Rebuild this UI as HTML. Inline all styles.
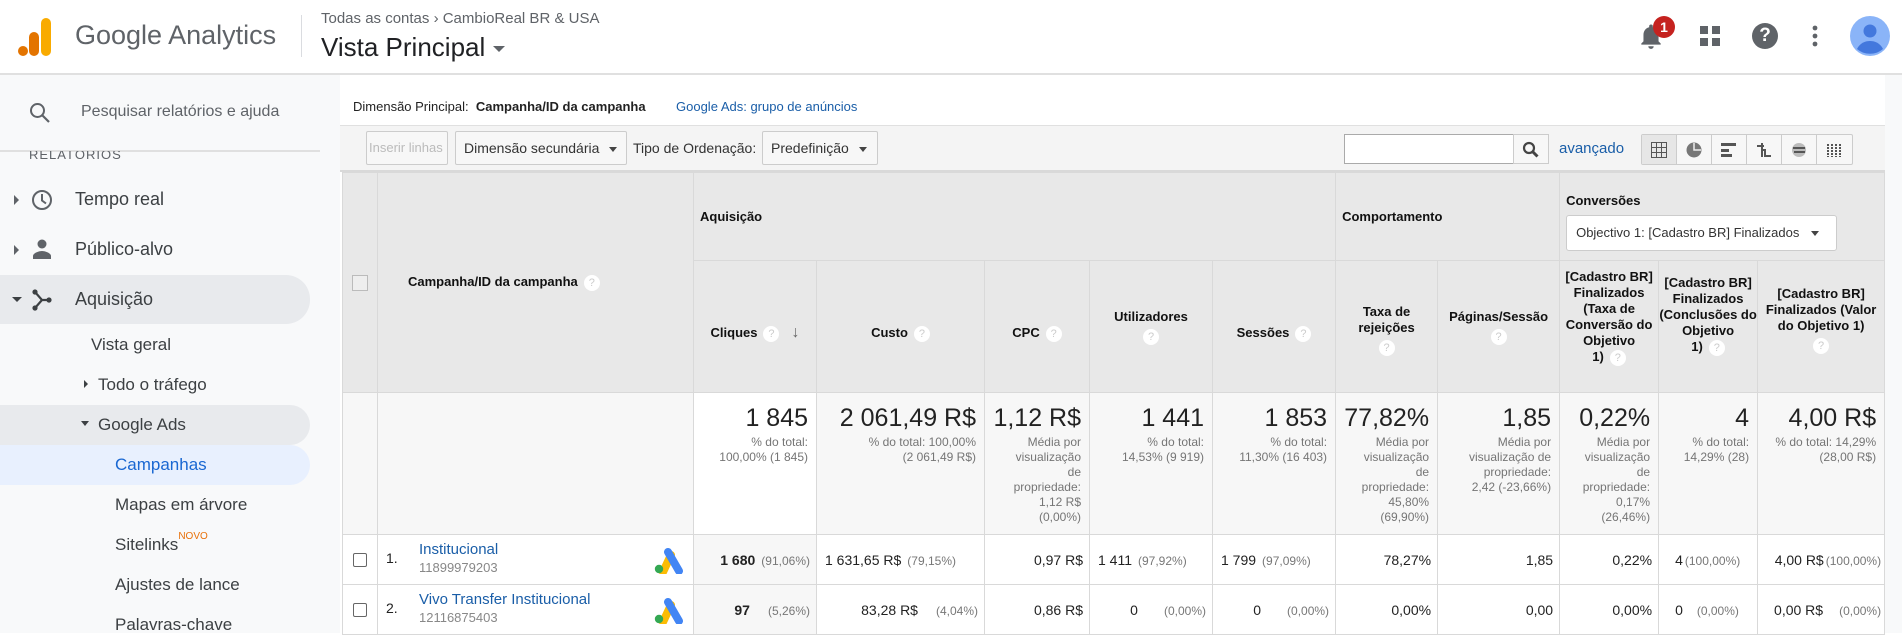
<!DOCTYPE html>
<html><head><meta charset="utf-8"><style>
*{box-sizing:border-box;margin:0;padding:0}
body{width:1902px;height:633px;overflow:hidden;font-family:"Liberation Sans",Arial,sans-serif;background:#fff;position:relative;color:#212121}
.a{position:absolute;white-space:nowrap}
#hdr{position:absolute;left:0;top:0;width:1902px;height:75px;border-bottom:2px solid #e0e0e0;background:#fff}
#side{position:absolute;left:0;top:75px;width:340px;height:558px;background:#f8f9fa;overflow:hidden}
.pill{position:absolute;left:0;width:310px;border-radius:0 24px 24px 0}
.si{position:absolute;font-size:18px;color:#3c4043}
.ss{position:absolute;font-size:17px;color:#3c4043}
#main{position:absolute;left:340px;top:75px;width:1545px;height:558px;background:#fff}
#rgt{position:absolute;left:1885px;top:75px;width:17px;height:558px;background:#f8f9fa}
.btn{position:absolute;border:1px solid #ccc;border-radius:2px;background:#f7f7f7;font-size:14px;color:#333;padding:0 8px;line-height:32px}
.caret{display:inline-block;width:0;height:0;border-left:4px solid transparent;border-right:4px solid transparent;border-top:5px solid #444;vertical-align:middle;margin-left:10px}
table{position:absolute;left:342px;top:172px;border-collapse:collapse;table-layout:fixed;width:1543px}
td{border:1px solid #d9d9d9;font-size:14px;vertical-align:middle;overflow:hidden}
.h{background:#e8e8e8;font-weight:bold;font-size:13px;color:#111;text-align:center;line-height:16px}
.q{display:inline-block;width:16px;height:16px;border-radius:50%;background:#fff;color:#ccc;font-size:11px;line-height:16px;text-align:center;font-weight:normal;vertical-align:middle;margin-left:6px}
.t{background:#f7f7f7;text-align:right;vertical-align:top;padding:10px 8px 0 4px;color:#757575;font-size:12px;line-height:15px}
.t b{display:block;font-weight:normal;font-size:25px;color:#222;line-height:30px;margin-bottom:2px}
.r{text-align:right;padding:0 6px;white-space:nowrap;color:#222}
.r s{text-decoration:none;color:#777;font-size:12px;margin-left:6px}
.cb{width:14px;height:14px;border:1.5px solid #666;border-radius:2px;margin:0 auto}
</style></head><body>
<div id="hdr">
 <svg class="a" style="left:18px;top:18px" width="34" height="38" viewBox="0 0 34 38"><rect x="23" y="0" width="10" height="38" rx="5" fill="#f9ab00"/><rect x="11" y="14" width="10" height="24" rx="5" fill="#e37400"/><circle cx="5" cy="33" r="5" fill="#e37400"/></svg>
 <div class="a" style="left:75px;top:20px;font-size:27px;color:#5f6368">Google Analytics</div>
 <div class="a" style="left:301px;top:15px;width:1px;height:42px;background:#dadce0"></div>
 <div class="a" style="left:321px;top:10px;font-size:15px;color:#5f6368">Todas as contas &rsaquo; CambioReal BR &amp; USA</div>
 <div class="a" style="left:321px;top:32px;font-size:26px;color:#202124">Vista Principal <span style="display:inline-block;border-left:6px solid transparent;border-right:6px solid transparent;border-top:6px solid #5f6368;vertical-align:middle"></span></div>
 <svg class="a" style="left:1638px;top:22px" width="26" height="28" viewBox="0 0 24 26"><path d="M12 25a2.5 2.5 0 0 0 2.5-2.5h-5A2.5 2.5 0 0 0 12 25zM19 18v-6c0-3.5-2-6.3-5.3-7.1V4a1.7 1.7 0 0 0-3.4 0v.9C7 5.7 5 8.5 5 12v6l-2 2v1h18v-1z" fill="#5f6368"/></svg>
 <div class="a" style="left:1653px;top:16px;width:22px;height:22px;border-radius:50%;background:#c5221f;color:#fff;font-size:14px;font-weight:bold;text-align:center;line-height:22px">1</div>
 <svg class="a" style="left:1700px;top:26px" width="20" height="20"><rect x="0" y="0" width="8" height="8" fill="#5f6368"/><rect x="12" y="0" width="8" height="8" fill="#5f6368"/><rect x="0" y="12" width="8" height="8" fill="#5f6368"/><rect x="12" y="12" width="8" height="8" fill="#5f6368"/></svg>
 <div class="a" style="left:1752px;top:23px;width:26px;height:26px;border-radius:50%;background:#5f6368;color:#fff;font-size:19px;font-weight:bold;text-align:center;line-height:26px">?</div>
 <svg class="a" style="left:1811px;top:25px" width="8" height="22"><circle cx="4" cy="3" r="2.4" fill="#5f6368"/><circle cx="4" cy="11" r="2.4" fill="#5f6368"/><circle cx="4" cy="19" r="2.4" fill="#5f6368"/></svg>
 <svg class="a" style="left:1850px;top:16px" width="40" height="40"><circle cx="20" cy="20" r="20" fill="#8ab4f8"/><circle cx="20" cy="15" r="6.5" fill="#4378dd"/><path d="M7 33c3-6 8-8 13-8s10 2 13 8a20 20 0 0 1-26 0z" fill="#4378dd"/></svg>
</div>
<div id="side">
 <svg class="a" style="left:29px;top:27px" width="22" height="22"><circle cx="8.5" cy="8.5" r="6.5" stroke="#5f6368" stroke-width="2" fill="none"/><path d="M13 13l7 7" stroke="#5f6368" stroke-width="2.2"/></svg>
 <div class="a" style="left:81px;top:28px;font-size:16px;color:#5f6368">Pesquisar relatórios e ajuda</div>
 <div class="a" style="left:0;top:75px;width:320px;height:2px;background:#e0e0e0"></div>
 <div class="a" style="left:29px;top:76px;font-size:13px;color:#5f6368;height:10px;overflow:hidden;line-height:8px;letter-spacing:1px">RELATÓRIOS</div>
 <div class="pill" style="top:200px;height:49px;background:#e8eaed"></div>
 <div class="pill" style="top:330px;height:40px;background:#e8eaed"></div>
 <div class="pill" style="top:370px;height:40px;background:#e8f0fe"></div>
 <div class="a" style="left:14px;top:120px;border-top:5px solid transparent;border-bottom:5px solid transparent;border-left:5px solid #5f6368"></div>
 <svg class="a" style="left:31px;top:114px" width="22" height="22"><circle cx="11" cy="11" r="9" stroke="#5f6368" stroke-width="2" fill="none"/><path d="M11 5v6.5l4 3" stroke="#5f6368" stroke-width="2" fill="none"/></svg>
 <div class="si" style="left:75px;top:114px">Tempo real</div>
 <div class="a" style="left:14px;top:170px;border-top:5px solid transparent;border-bottom:5px solid transparent;border-left:5px solid #5f6368"></div>
 <svg class="a" style="left:32px;top:164px" width="20" height="20"><circle cx="10" cy="5" r="4.5" fill="#5f6368"/><path d="M1 20v-3c0-3 6-5 9-5s9 2 9 5v3z" fill="#5f6368"/></svg>
 <div class="si" style="left:75px;top:164px">Público-alvo</div>
 <div class="a" style="left:12px;top:222px;border-left:5px solid transparent;border-right:5px solid transparent;border-top:5px solid #3c4043"></div>
 <svg class="a" style="left:31px;top:214px" width="22" height="22"><path d="M4 3l7 8-7 8M11 11h7" stroke="#3c4043" stroke-width="2.2" fill="none"/><circle cx="4" cy="3" r="2.6" fill="#3c4043"/><circle cx="4" cy="19" r="2.6" fill="#3c4043"/><circle cx="18" cy="11" r="2.6" fill="#3c4043"/></svg>
 <div class="si" style="left:75px;top:214px">Aquisição</div>
 <div class="ss" style="left:91px;top:260px">Vista geral</div>
 <div class="a" style="left:84px;top:305px;border-top:4px solid transparent;border-bottom:4px solid transparent;border-left:4px solid #3c4043"></div>
 <div class="ss" style="left:98px;top:300px">Todo o tráfego</div>
 <div class="a" style="left:81px;top:346px;border-left:4px solid transparent;border-right:4px solid transparent;border-top:5px solid #3c4043"></div>
 <div class="ss" style="left:98px;top:340px">Google Ads</div>
 <div class="ss" style="left:115px;top:380px;color:#1967d2">Campanhas</div>
 <div class="ss" style="left:115px;top:420px">Mapas em árvore</div>
 <div class="ss" style="left:115px;top:460px">Sitelinks<sup style="font-size:10px;color:#e8710a;position:relative;top:-4px">NOVO</sup></div>
 <div class="ss" style="left:115px;top:500px">Ajustes de lance</div>
 <div class="ss" style="left:115px;top:540px">Palavras-chave</div>
</div>
<div id="main">
 <div class="a" style="left:13px;top:24px;font-size:13px;color:#222">Dimensão Principal:&nbsp; <b>Campanha/ID da campanha</b></div>
 <div class="a" style="left:336px;top:24px;font-size:13px;color:#1a5ea8">Google Ads: grupo de anúncios</div>
 <div class="a" style="left:0;top:50px;width:1545px;height:47px;background:#f4f4f4;border-top:1px solid #e0e0e0;border-bottom:2px solid #d9d9d9"></div>
</div>
<div id="rgt"></div>
<div class="btn" style="left:366px;top:131px;width:82px;height:34px;color:#bbb;padding:0 2px;font-size:13px">Inserir linhas</div>
<div class="btn" style="left:455px;top:131px;width:172px;height:34px">Dimensão secundária<span class="caret"></span></div>
<div class="a" style="left:633px;top:140px;font-size:14px;color:#333">Tipo de Ordenação:</div>
<div class="btn" style="left:762px;top:131px;width:116px;height:34px">Predefinição<span class="caret"></span></div>
<div class="a" style="left:1344px;top:134px;width:170px;height:30px;border:1px solid #aaa;background:#fff"></div>
<div class="a" style="left:1513px;top:134px;width:36px;height:30px;border:1px solid #ccc;background:#f7f7f7"></div>
<svg class="a" style="left:1522px;top:141px" width="18" height="18"><circle cx="7" cy="7" r="5" stroke="#444" stroke-width="2.2" fill="none"/><path d="M10.5 10.5l5 5" stroke="#444" stroke-width="3"/></svg>
<div class="a" style="left:1559px;top:140px;font-size:15px;color:#1a5ea8">avançado</div>
<div class="a" style="left:1641px;top:134px;width:212px;height:31px;border:1px solid #ccc;border-radius:2px;background:#f7f7f7;display:flex">
 <div style="width:35px;border-right:1px solid #ccc;background:#e6e6e6;display:flex;align-items:center;justify-content:center"><svg width="16" height="16"><path d="M.5 .5h15v15H.5zM5.5 .5v15M10.5 .5v15M.5 5.5h15M.5 10.5h15" stroke="#555" fill="none"/></svg></div>
 <div style="width:35px;border-right:1px solid #ccc;display:flex;align-items:center;justify-content:center"><svg width="16" height="16"><circle cx="8" cy="8" r="7.5" fill="#777"/><path d="M8 1v7h7" stroke="#eee" stroke-width="1.5" fill="none"/></svg></div>
 <div style="width:35px;border-right:1px solid #ccc;display:flex;align-items:center;justify-content:center"><svg width="16" height="16"><rect y="1" width="15" height="3" fill="#555"/><rect y="7" width="8" height="3" fill="#555"/><rect y="12" width="11" height="3" fill="#555"/></svg></div>
 <div style="width:35px;border-right:1px solid #ccc;display:flex;align-items:center;justify-content:center"><svg width="16" height="16"><path d="M1 4h7M6 1v14M6 8h4M9 8v6h6" stroke="#555" stroke-width="2" fill="none"/></svg></div>
 <div style="width:35px;border-right:1px solid #ccc;display:flex;align-items:center;justify-content:center"><svg width="16" height="16"><circle cx="8" cy="8" r="7" fill="#bbb"/><rect x="2" y="5" width="12" height="2" fill="#555"/><rect x="3" y="9" width="11" height="2" fill="#555"/></svg></div>
 <div style="flex:1;display:flex;align-items:center;justify-content:center"><svg width="16" height="16"><path d="M1 2v13M5 2v13M9 2v13M13 2v13" stroke="#555" stroke-width="2" stroke-dasharray="2 1" fill="none"/></svg></div>
</div>
<table>
<colgroup><col style="width:35px"><col style="width:316px"><col style="width:123px"><col style="width:168px"><col style="width:105px"><col style="width:123px"><col style="width:123px"><col style="width:102px"><col style="width:122px"><col style="width:99px"><col style="width:99px"><col style="width:127px"></colgroup>
<tr style="height:88px">
 <td class="h" rowspan="2"><div style="width:16px;height:16px;border:1px solid #bbb;background:#eee;margin:0 auto"></div></td>
 <td class="h" rowspan="2" style="text-align:left;padding-left:30px">Campanha/ID da campanha<span class="q">?</span></td>
 <td class="h" colspan="5" style="text-align:left;padding-left:6px">Aquisição</td>
 <td class="h" colspan="2" style="text-align:left;padding-left:6px">Comportamento</td>
 <td class="h" colspan="3" style="text-align:left;padding-left:6px;vertical-align:top;padding-top:20px">Conversões
  <div style="margin-top:6px;width:271px;height:36px;border:1px solid #ccc;border-radius:3px;background:#fff;font-weight:normal;font-size:13px;color:#333;line-height:34px;padding-left:9px">Objectivo 1: [Cadastro BR] Finalizados<span class="caret" style="margin-left:12px"></span></div></td>
</tr>
<tr style="height:132px">
 <td class="h" style="padding-top:14px">Cliques<span class="q">?</span><span style="margin-left:12px;color:#666;font-size:16px">&#8595;</span></td>
 <td class="h" style="padding-top:14px">Custo<span class="q">?</span></td>
 <td class="h" style="padding-top:14px">CPC<span class="q">?</span></td>
 <td class="h" style="padding-top:0">Utilizadores<br><span class="q" style="margin:4px 0 0">?</span></td>
 <td class="h" style="padding-top:14px">Sessões<span class="q">?</span></td>
 <td class="h" style="padding-top:6px">Taxa de<br>rejeições<br><span class="q" style="margin:4px 0 0">?</span></td>
 <td class="h" style="padding-top:0">Páginas/Sessão<br><span class="q" style="margin:4px 0 0">?</span></td>
 <td class="h" style="vertical-align:top;padding-top:8px">[Cadastro BR] Finalizados (Taxa de Conversão do Objetivo<br>1)<span class="q">?</span></td>
 <td class="h" style="vertical-align:top;padding-top:14px">[Cadastro BR] Finalizados (Conclusões do Objetivo<br>1)<span class="q">?</span></td>
 <td class="h" style="padding-bottom:14px">[Cadastro BR] Finalizados (Valor do Objetivo 1)<br><span class="q" style="margin:4px 0 0">?</span></td>
</tr>
<tr style="height:142px">
 <td class="t"></td><td class="t"></td>
 <td class="t" style="background:#fff"><b>1 845</b>% do total:<br>100,00% (1 845)</td>
 <td class="t"><b>2 061,49 R$</b>% do total: 100,00%<br>(2 061,49 R$)</td>
 <td class="t"><b>1,12 R$</b>Média por<br>visualização<br>de<br>propriedade:<br>1,12 R$<br>(0,00%)</td>
 <td class="t"><b>1 441</b>% do total:<br>14,53% (9 919)</td>
 <td class="t"><b>1 853</b>% do total:<br>11,30% (16 403)</td>
 <td class="t"><b>77,82%</b>Média por<br>visualização<br>de<br>propriedade:<br>45,80%<br>(69,90%)</td>
 <td class="t"><b>1,85</b>Média por<br>visualização de<br>propriedade:<br>2,42 (-23,66%)</td>
 <td class="t"><b>0,22%</b>Média por<br>visualização<br>de<br>propriedade:<br>0,17%<br>(26,46%)</td>
 <td class="t"><b>4</b>% do total:<br>14,29% (28)</td>
 <td class="t"><b>4,00 R$</b>% do total: 14,29%<br>(28,00 R$)</td>
</tr>
<tr style="height:50px">
 <td><div class="cb"></div></td>
 <td style="position:relative;padding-left:8px"><span style="position:absolute;left:8px;top:15px">1.</span><div style="position:absolute;left:41px;top:6px;color:#1a5ea8;font-size:15px">Institucional</div><div style="position:absolute;left:41px;top:25px;color:#888;font-size:13px">11899979203</div>
  <svg style="position:absolute;left:276px;top:12px" width="30" height="27"><path d="M9 25L17 8" stroke="#fbbc04" stroke-width="8" stroke-linecap="round"/><path d="M14 5l11 19" stroke="#4285f4" stroke-width="8" stroke-linecap="round"/><circle cx="5" cy="22" r="4.2" fill="#34a853"/></svg></td>
 <td class="r" style="background:#f7f7f7"><b>1 680</b><s>(91,06%)</s></td>
 <td class="r" style="text-align:left;padding-left:8px">1 631,65 R$<s>(79,15%)</s></td>
 <td class="r">0,97 R$</td>
 <td class="r" style="text-align:left;padding-left:8px">1 411<s>(97,92%)</s></td>
 <td class="r" style="text-align:left;padding-left:8px">1 799<s>(97,09%)</s></td>
 <td class="r">78,27%</td><td class="r">1,85</td><td class="r">0,22%</td>
 <td class="r" style="text-align:left;padding-left:16px">4<s style="margin-left:2px">(100,00%)</s></td>
 <td class="r" style="padding:0 3px">4,00 R$<s style="margin-left:2px">(100,00%)</s></td>
</tr>
<tr style="height:50px">
 <td><div class="cb"></div></td>
 <td style="position:relative"><span style="position:absolute;left:8px;top:15px">2.</span><div style="position:absolute;left:41px;top:6px;color:#1a5ea8;font-size:15px">Vivo Transfer Institucional</div><div style="position:absolute;left:41px;top:25px;color:#888;font-size:13px">12116875403</div>
  <svg style="position:absolute;left:276px;top:12px" width="30" height="27"><path d="M9 25L17 8" stroke="#fbbc04" stroke-width="8" stroke-linecap="round"/><path d="M14 5l11 19" stroke="#4285f4" stroke-width="8" stroke-linecap="round"/><circle cx="5" cy="22" r="4.2" fill="#34a853"/></svg></td>
 <td class="r" style="background:#f7f7f7"><b>97</b><s style="margin-left:18px">(5,26%)</s></td>
 <td class="r">83,28 R$<s style="margin-left:18px">(4,04%)</s></td>
 <td class="r">0,86 R$</td>
 <td class="r">0<s style="margin-left:26px">(0,00%)</s></td>
 <td class="r">0<s style="margin-left:26px">(0,00%)</s></td>
 <td class="r">0,00%</td><td class="r">0,00</td><td class="r">0,00%</td>
 <td class="r" style="text-align:left;padding-left:16px">0<s style="margin-left:14px">(0,00%)</s></td>
 <td class="r" style="padding:0 3px">0,00 R$<s style="margin-left:16px">(0,00%)</s></td>
</tr>
</table>
</body></html>
